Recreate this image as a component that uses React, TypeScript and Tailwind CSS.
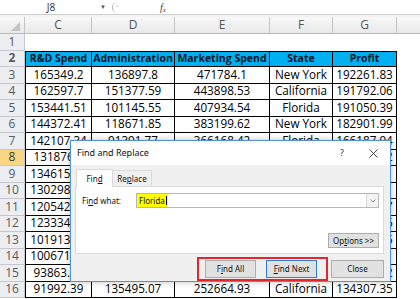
const ROWS: string[][] = [
  ["165349.2", "136897.8", "471784.1", "New York", "192261.83"],
  ["162597.7", "151377.59", "443898.53", "California", "191792.06"],
  ["153441.51", "101145.55", "407934.54", "Florida", "191050.39"],
  ["144372.41", "118671.85", "383199.62", "New York", "182901.99"],
  ["142107.34", "91391.77", "366168.42", "Florida", "166187.94"],
  ["131876.9", "99814.71", "362861.36", "New York", "156991.12"],
  ["134615.46", "147198.87", "127716.82", "California", "156122.51"],
  ["130298.13", "145530.06", "323876.68", "Florida", "155752.6"],
  ["120542.52", "148718.95", "311613.29", "New York", "152211.77"],
  ["123334.88", "108679.17", "304981.62", "California", "149759.96"],
  ["101913.08", "110594.11", "229160.95", "Florida", "146121.95"],
  ["100671.96", "91790.61", "249744.55", "California", "144259.4"],
  ["93863.75", "127320.38", "249839.44", "Florida", "141585.52"],
  ["91992.39", "135495.07", "252664.93", "California", "134307.35"],
];

const HEAD = ["R&D Spend", "Administration", "Marketing Spend", "State", "Profit"];
const COLS = [
  { name: "C", w: "w-[67px]" },
  { name: "D", w: "w-[83px]" },
  { name: "E", w: "w-[95px]" },
  { name: "F", w: "w-[63px]" },
  { name: "G", w: "w-[64px]" },
];

function RowHead({ n, active }: { n: number; active?: boolean }) {
  return (
    <div
      className={`w-[25px] shrink-0 flex items-center justify-center border-r border-b border-[#c5c9cf] text-[12px] ${
        active ? "bg-[#f7d784] text-[#3a3a3a]" : "bg-[#eceef1] text-[#5a5a5a]"
      }`}
    >
      {n}
    </div>
  );
}

function Btn({ children, primary, w }: { children: React.ReactNode; primary?: boolean; w: string }) {
  return (
    <div
      className={`${w} h-[18px] flex items-center justify-center bg-[#e1e1e1] text-[8px] text-[#111] whitespace-nowrap border ${
        primary ? "border-[#2a7fd4]" : "border-[#adadad]"
      }`}
    >
      {children}
    </div>
  );
}

export default function App() {
  return (
    <div className="relative w-[420px] h-[299px] overflow-hidden bg-white font-['Open_Sans',sans-serif] select-none">
      {/* formula bar */}
      <div className="h-[15px] flex items-center border-b border-[#cfcfcf] text-[10px] text-[#333]">
        <div className="w-[100px] text-center pl-[2px]">J8</div>
        <div className="w-[12px] text-[6px] text-[#555]">▼</div>
        <div className="w-[14px] flex items-center">
          <div className="w-[6px] h-[11px] rounded-l-full border-l border-[#b5b5b5]" />
          <span className="text-[8px] text-[#c8c8c8] -ml-[2px]">⁼</span>
        </div>
        <div className="w-[34px]" />
        <div className="italic font-['Liberation_Serif',serif] text-[10px] text-[#444]">
          f<sub className="text-[7px]">x</sub>
        </div>
      </div>
      <div className="h-[2px] bg-[#f3f3f3]" />

      {/* column headers */}
      <div className="flex h-[17px] border-b border-[#b9b9b9] bg-gradient-to-b from-[#f8f8f8] to-[#e9e9e9] text-[12px] text-[#555]">
        <div className="relative w-[25px] shrink-0 border-r border-[#c5c5c5]">
          <svg className="absolute right-[4px] bottom-[2px]" width="9" height="9" viewBox="0 0 9 9">
            <path d="M9 0 L9 9 L0 9 Z" fill="#c4c4c4" />
          </svg>
        </div>
        {COLS.map((c) => (
          <div key={c.name} className={`${c.w} shrink-0 flex items-center justify-center border-r border-[#c5c5c5]`}>
            {c.name}
          </div>
        ))}
        <div className="flex-1" />
      </div>

      {/* row 1 */}
      <div className="flex h-[16.5px]">
        <RowHead n={1} />
        <div className="flex-1" />
      </div>

      {/* row 2 header */}
      <div className="flex h-[16.5px] text-[10.5px] font-bold text-[#0d1526]">
        <RowHead n={2} />
        {HEAD.map((h, i) => (
          <div
            key={h}
            className={`${COLS[i].w} shrink-0 flex items-center justify-center whitespace-nowrap bg-[#00b0f0] border-t border-r border-b border-black ${
              i === 0 ? "border-l" : ""
            }`}
          >
            {h}
          </div>
        ))}
        <div className="flex-1" />
      </div>

      {ROWS.map((r, ri) => (
        <div key={ri} className="flex h-[16.5px] text-[11.7px] text-black">
          <RowHead n={ri + 3} active={ri + 3 === 8} />
          {r.map((v, i) => (
            <div
              key={i}
              className={`${COLS[i].w} shrink-0 flex items-center justify-center whitespace-nowrap border-r border-b border-black ${
                i === 0 ? "border-l" : ""
              }`}
            >
              {v}
            </div>
          ))}
          <div className="flex-1" />
        </div>
      ))}

      {/* Find and Replace dialog */}
      <div className="absolute left-[70px] top-[140px] w-[321px] h-[142px] flex flex-col bg-[#f0f0f0] border border-[#4f93d2] shadow-[0_0_6px_rgba(0,0,0,0.25)] font-['Noto_Sans',sans-serif] text-[#111]">
        <div className="h-[24px] shrink-0 bg-white flex items-center pl-[6px] pr-[12px] text-[9px]">
          <span>Find and Replace</span>
          <span className="ml-auto text-[9px] text-[#333]">?</span>
          <svg className="ml-[25px]" width="9" height="9" viewBox="0 0 9 9">
            <path d="M0.5 0.5 L8.5 8.5 M8.5 0.5 L0.5 8.5" stroke="#333" strokeWidth="0.9" />
          </svg>
        </div>

        <div className="flex-1 flex flex-col pl-[4px] pr-[6px] pt-[3px]">
          {/* tabs */}
          <div className="flex items-end h-[18px] pl-[1px] text-[8px]">
            <div className="w-[37px] h-[18px] bg-white border-t border-l border-r border-[#d9d9d9] flex items-center justify-center -mb-px relative z-10">
              Fin<span className="underline">d</span>
            </div>
            <div className="w-[39px] h-[16px] border-t border-r border-[#d9d9d9] flex items-center justify-center">
              Re<span className="underline">p</span>lace
            </div>
          </div>

          {/* panel */}
          <div className="h-[68px] bg-white border border-[#d9d9d9] flex flex-col pl-[6px] pr-[4px] pt-[6px]">
            <div className="flex items-center h-[15px] text-[8px]">
              <span className="w-[54px]">
                Fi<span className="underline">n</span>d what:
              </span>
              <div className="flex-1 h-[15px] flex items-center border border-[#b8b8b8]">
                <span className="h-[13px] flex items-center bg-[#ffff00] pl-[2px] pr-[1px] text-[8px]">
                  Florida<span className="w-px h-[9px] bg-black ml-px" />
                </span>
                <div className="ml-auto w-[12px] h-[13px] flex items-center justify-center border-l border-[#d9d9d9] bg-[#f3f3f3]">
                  <svg width="6" height="4" viewBox="0 0 6 4">
                    <path d="M0.5 0.5 L3 3 L5.5 0.5" stroke="#777" strokeWidth="0.8" fill="none" />
                  </svg>
                </div>
              </div>
            </div>
            <div className="flex justify-end mt-[25px]">
              <div className="w-[51px] h-[15px] flex items-center justify-center whitespace-nowrap bg-[#e1e1e1] border border-[#adadad] text-[8px]">
                Op<span className="underline">t</span>ions &gt;&gt;
              </div>
            </div>
          </div>

          {/* bottom buttons */}
          <div className="flex items-center justify-end h-[29px]">
            <div className="flex items-center gap-[10px] border-2 border-[#e3262b] pl-[6px] pr-[9px] py-[1px]">
              <Btn w="w-[51px]">
                F<span className="underline">i</span>nd All
              </Btn>
              <Btn w="w-[51px]" primary>
                <span className="underline">F</span>ind Next
              </Btn>
            </div>
            <div className="ml-[3px]">
              <Btn w="w-[53px]">Close</Btn>
            </div>
          </div>
        </div>
      </div>
    </div>
  );
}
